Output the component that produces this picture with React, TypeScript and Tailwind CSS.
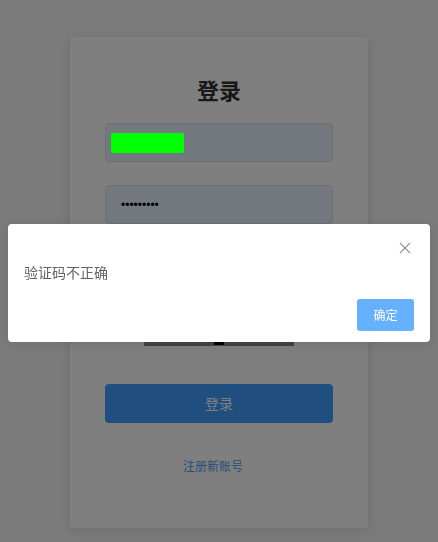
export default function App() {
  return (
    <div className="relative min-h-screen bg-[#f6f6f6] pt-[37px] font-['Helvetica_Neue','Noto_Sans_CJK_SC',sans-serif]">
      {/* Login card */}
      <div className="mx-auto flex h-[491px] w-[298px] flex-col items-stretch rounded-[4px] bg-white px-[35px] pt-[37px] shadow-[0_2px_12px_rgba(0,0,0,0.12)]">
        <h2 className="text-center text-[22px] font-bold leading-[30px] text-[#303133]">登录</h2>

        <div className="mt-[19px] flex h-[39px] items-center rounded-[4px] border border-[#dcdfe6] bg-[#e8f0fe] px-[5px]">
          {/* redaction block sits above the dim overlay */}
          <div className="relative z-10 h-[20px] w-[73px] rounded-[2px] bg-[#00ff00]"></div>
        </div>

        <div className="mt-[23px] flex h-[39px] items-center rounded-[4px] border border-[#dcdfe6] bg-[#e8f0fe] px-[15px] font-['Liberation_Sans',sans-serif] text-[12px] text-black">
          •••••••••
        </div>

        <div className="mt-[23px] flex h-[39px] items-center rounded-[4px] border border-[#dcdfe6] bg-white px-[15px] text-[14px] text-[#c0c4cc]">
          请输入验证码
        </div>

        <div className="mx-auto mt-[20px] flex h-[40px] w-[150px] items-end justify-center bg-[#888888] pb-[1px]">
          <span className="h-[3px] w-[10px] bg-black"></span>
        </div>

        <button className="mt-[38px] h-[39px] rounded-[4px] bg-[#409eff] text-[14px] text-white">登录</button>

        <div className="mt-[35px] flex justify-center pr-[12px]">
          <a className="text-[12px] leading-[16px] text-[#4a9ff5]">注册新账号</a>
        </div>
      </div>

      {/* Overlay */}
      <div className="fixed inset-0 bg-black/50"></div>

      {/* Message box */}
      <div className="absolute left-[8px] top-[224px] w-[422px] rounded-[4px] bg-white pb-[11px] shadow-[0_2px_12px_rgba(0,0,0,0.1)]">
        <button className="absolute right-[19px] top-[18px] text-[#909399]">
          <svg width="12" height="12" viewBox="0 0 12 12" fill="none" stroke="currentColor" strokeWidth="1.1">
            <path d="M1 1L11 11M11 1L1 11" />
          </svg>
        </button>
        <p className="px-[16px] pt-[36px] text-[14px] leading-[24px] text-[#606266]">验证码不正确</p>
        <div className="mt-[15px] flex justify-end pr-[16px]">
          <button className="h-[32px] w-[57px] rounded-[3px] bg-[#66b1ff] text-[12px] text-white">确定</button>
        </div>
      </div>
    </div>
  );
}
